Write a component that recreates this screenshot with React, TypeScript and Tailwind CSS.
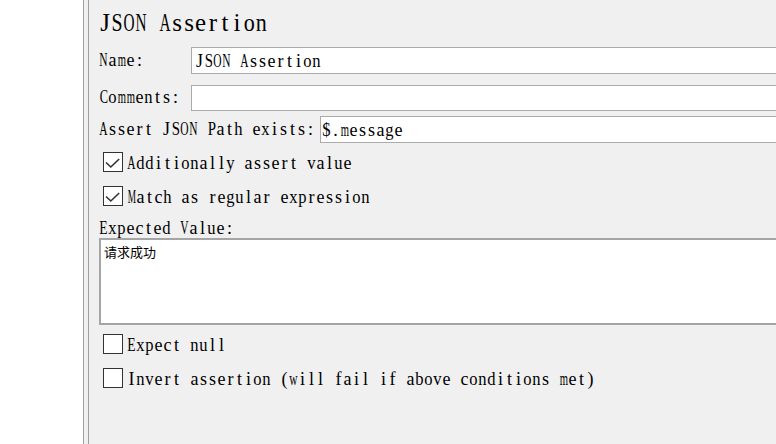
import React from "react";

let ctx: CanvasRenderingContext2D | null = null;
function measure(ch: string, size: number): number {
  if (!ctx) ctx = document.createElement("canvas").getContext("2d");
  if (!ctx) return size * 0.5;
  ctx.font = `${size}px "Liberation Serif", serif`;
  return ctx.measureText(ch).width;
}

function Mono({ text, title = false }: { text: string; title?: boolean }) {
  const size = title ? 25 : 18;
  const cell = title ? 12 : 9;
  const cellClass = title ? "w-[12px]" : "w-[9px]";
  return (
    <span
      className={
        "inline-flex whitespace-nowrap leading-none text-black font-['Liberation_Serif',serif] " +
        (title ? "text-[25px]" : "text-[18px]")
      }
    >
      {Array.from(text).map((ch, i) => {
        if (ch === " ")
          return (
            <span key={i} className={"inline-block shrink-0 " + cellClass}>
              {"\u00a0"}
            </span>
          );
        const s = Math.min(1, (cell * 0.92) / measure(ch, size));
        return (
          <span key={i} className={"inline-flex justify-center shrink-0 " + cellClass}>
            <span className="inline-block" style={{ transform: `scaleX(${s})` }}>
              {ch}
            </span>
          </span>
        );
      })}
    </span>
  );
}

function Check({ checked }: { checked: boolean }) {
  return (
    <div className="w-[20px] h-[20px] border border-[#333333] bg-white shrink-0 relative">
      {checked && (
        <svg width="20" height="20" viewBox="0 0 20 20" className="absolute left-[-1px] top-[-1px]">
          <polyline points="3,10.5 7.8,15 16.2,7" fill="none" stroke="#333333" strokeWidth="1.6" />
        </svg>
      )}
    </div>
  );
}

function CheckRow({ checked, label, className }: { checked: boolean; label: string; className: string }) {
  return (
    <div className={"flex items-center h-[20px] " + className}>
      <div className="ml-[4px]">
        <Check checked={checked} />
      </div>
      <span className="ml-[4px] pt-[4px]">
        <Mono text={label} />
      </span>
    </div>
  );
}

export default function App() {
  return (
    <div className="w-[776px] h-[444px] flex bg-[#f0f0f0] overflow-hidden font-['Liberation_Serif',serif]">
      <div className="w-[83px] h-full bg-white shrink-0" />
      <div className="w-[1px] h-full bg-[#a0a0a0] shrink-0" />
      <div className="w-[4px] h-full bg-[#f0f0f0] shrink-0" />
      <div className="w-[1px] h-full bg-[#a0a0a0] shrink-0" />
      <div className="flex-1 h-full overflow-hidden pl-[10px]">
        <div className="flex flex-col mr-[-30px]">
          <div className="h-[44px] flex items-center">
            <Mono text="JSON Assertion" title />
          </div>
          <div className="flex items-center h-[27px] mt-[3px]">
            <span className="w-[92px] shrink-0 pt-[1px]">
              <Mono text="Name:" />
            </span>
            <div className="flex-1 h-full border border-[#ababab] bg-white flex items-center pl-[3px] pt-[1px]">
              <Mono text="JSON Assertion" />
            </div>
          </div>
          <div className="flex items-center h-[26px] mt-[11px]">
            <span className="w-[92px] shrink-0">
              <Mono text="Comments:" />
            </span>
            <div className="flex-1 h-full border border-[#ababab] bg-white" />
          </div>
          <div className="flex items-center h-[27px] mt-[5px]">
            <span className="w-[221px] shrink-0 pt-[1px]">
              <Mono text="Assert JSON Path exists:" />
            </span>
            <div className="flex-1 h-full border border-[#ababab] bg-white flex items-center pl-[1px] pt-[1px]">
              <Mono text="$.message" />
            </div>
          </div>
          <CheckRow checked={true} label="Additionally assert value" className="mt-[9px]" />
          <CheckRow checked={true} label="Match as regular expression" className="mt-[14px]" />
          <div className="h-[20px] mt-[12px] flex items-center">
            <Mono text="Expected Value:" />
          </div>
          <div className="h-[87px] border-2 border-[#a5a5a5] bg-white pl-[3px]">
            <span className="text-[13px] text-black leading-[20px] font-['Noto_Sans_CJK_SC',sans-serif]">
              请求成功
            </span>
          </div>
          <CheckRow checked={false} label="Expect null" className="mt-[9px]" />
          <CheckRow checked={false} label="Invert assertion (will fail if above conditions met)" className="mt-[14px]" />
        </div>
      </div>
    </div>
  );
}
